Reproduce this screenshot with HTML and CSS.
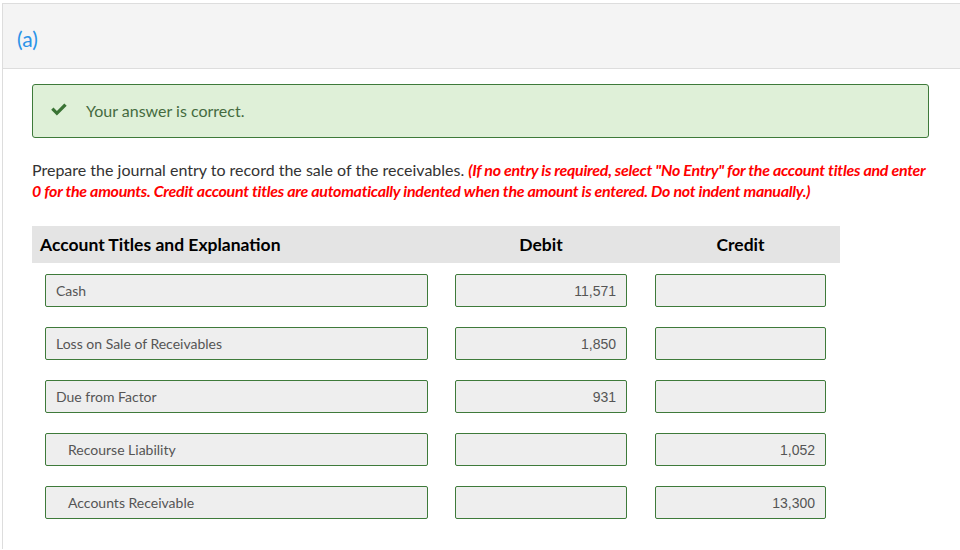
FILE: index.html
```html
<!DOCTYPE html>
<html>
<head>
<meta charset="utf-8">
<link rel="stylesheet" href="styles.css">
</head>
<body>
<div class="frame">
  <div class="part-head"><span class="part-label">(a)</span></div>
  <div class="content">
    <div class="alert">
      <svg class="check" viewBox="0 0 18 13" width="18" height="13"><path d="M1.2 6.8 L3.5 4.5 L6.9 7.9 L14.3 0.4 L16.7 2.7 L6.9 12.5 Z" fill="#3a7334"/></svg>
      <span class="alert-text">Your answer is correct.</span>
    </div>
    <p class="prompt">Prepare the journal entry to record the sale of the receivables. <em class="note">(If no entry is required, select "No Entry" for the account titles and enter 0 for the amounts. Credit account titles are automatically indented when the amount is entered. Do not indent manually.)</em></p>
    <div class="journal">
      <div class="jhead acct-h">Account Titles and Explanation</div>
      <div class="jhead num-h">Debit</div>
      <div class="jhead num-h">Credit</div>

      <div class="cell"><div class="field acct">Cash</div></div>
      <div class="cell"><div class="field num">11,571</div></div>
      <div class="cell"><div class="field num"></div></div>

      <div class="cell"><div class="field acct">Loss on Sale of Receivables</div></div>
      <div class="cell"><div class="field num">1,850</div></div>
      <div class="cell"><div class="field num"></div></div>

      <div class="cell"><div class="field acct">Due from Factor</div></div>
      <div class="cell"><div class="field num">931</div></div>
      <div class="cell"><div class="field num"></div></div>

      <div class="cell"><div class="field acct indent">Recourse Liability</div></div>
      <div class="cell"><div class="field num"></div></div>
      <div class="cell"><div class="field num">1,052</div></div>

      <div class="cell"><div class="field acct indent">Accounts Receivable</div></div>
      <div class="cell"><div class="field num"></div></div>
      <div class="cell"><div class="field num">13,300</div></div>
    </div>
  </div>
</div>
</body>
</html>
```
FILE: styles.css
```css
html, body {
  margin: 0;
  padding: 0;
  background: #ffffff;
  overflow: hidden;
}
body {
  font-family: Lato, "Open Sans", sans-serif;
  color: #333333;
}
.frame {
  margin: 3px 0 0 2px;
  border-top: 1px solid #dddddd;
  border-left: 1px solid #dddddd;
  height: 546px;
  box-sizing: border-box;
}
.part-head {
  height: 64px;
  background: #f4f4f4;
  border-bottom: 1px solid #dddddd;
  display: flex;
  align-items: center;
  padding-left: 14px;
}
.part-label {
  font-size: 21px;
  color: #2a93e8;
  line-height: 1;
  margin-top: 4px;
}
.content {
  padding: 15px 0 0 29px;
}
.alert {
  width: 895px;
  height: 52px;
  box-sizing: content-box;
  background: #dff0d8;
  border: 1px solid #3e7a3a;
  border-radius: 3px;
  display: flex;
  align-items: center;
}
.check {
  margin-left: 17px;
  margin-bottom: 3px;
}
.alert-text {
  margin-left: 18px;
  margin-bottom: 1px;
  font-size: 16px;
  color: #456b3f;
}
.prompt {
  margin: 21px 0 0 0;
  width: 900px;
  font-size: 16px;
  line-height: 21px;
  color: #333333;
}
.note {
  color: #ff0000;
  font-weight: bold;
  font-style: italic;
  letter-spacing: -0.28px;
}
.journal {
  margin-top: 25px;
  display: grid;
  grid-template-columns: 409px 200px 199px;
  row-gap: 20px;
  width: 808px;
}
.jhead {
  background: #e4e4e4;
  height: 37px;
  display: flex;
  align-items: center;
  font-size: 17.5px;
  font-weight: bold;
  color: #000000;
  margin-bottom: -9px;
}
.acct-h {
  padding-left: 8px;
}
.num-h {
  justify-content: center;
}
.cell {
  padding: 0 13px 0 13px;
}
.cell:nth-child(3n+2), .cell:nth-child(3n) {
  padding: 0 14px 0 14px;
}
.field {
  height: 31px;
  box-sizing: content-box;
  border: 1px solid #3e7a3a;
  border-radius: 2px;
  background: #eeeeee;
  display: flex;
  align-items: center;
  font-size: 14px;
  color: #555555;
}
.acct {
  padding-left: 10px;
}
.acct.indent {
  padding-left: 22px;
}
.num {
  justify-content: flex-end;
  padding-right: 10px;
  font-family: "Liberation Sans", Arial, sans-serif;
}
```
